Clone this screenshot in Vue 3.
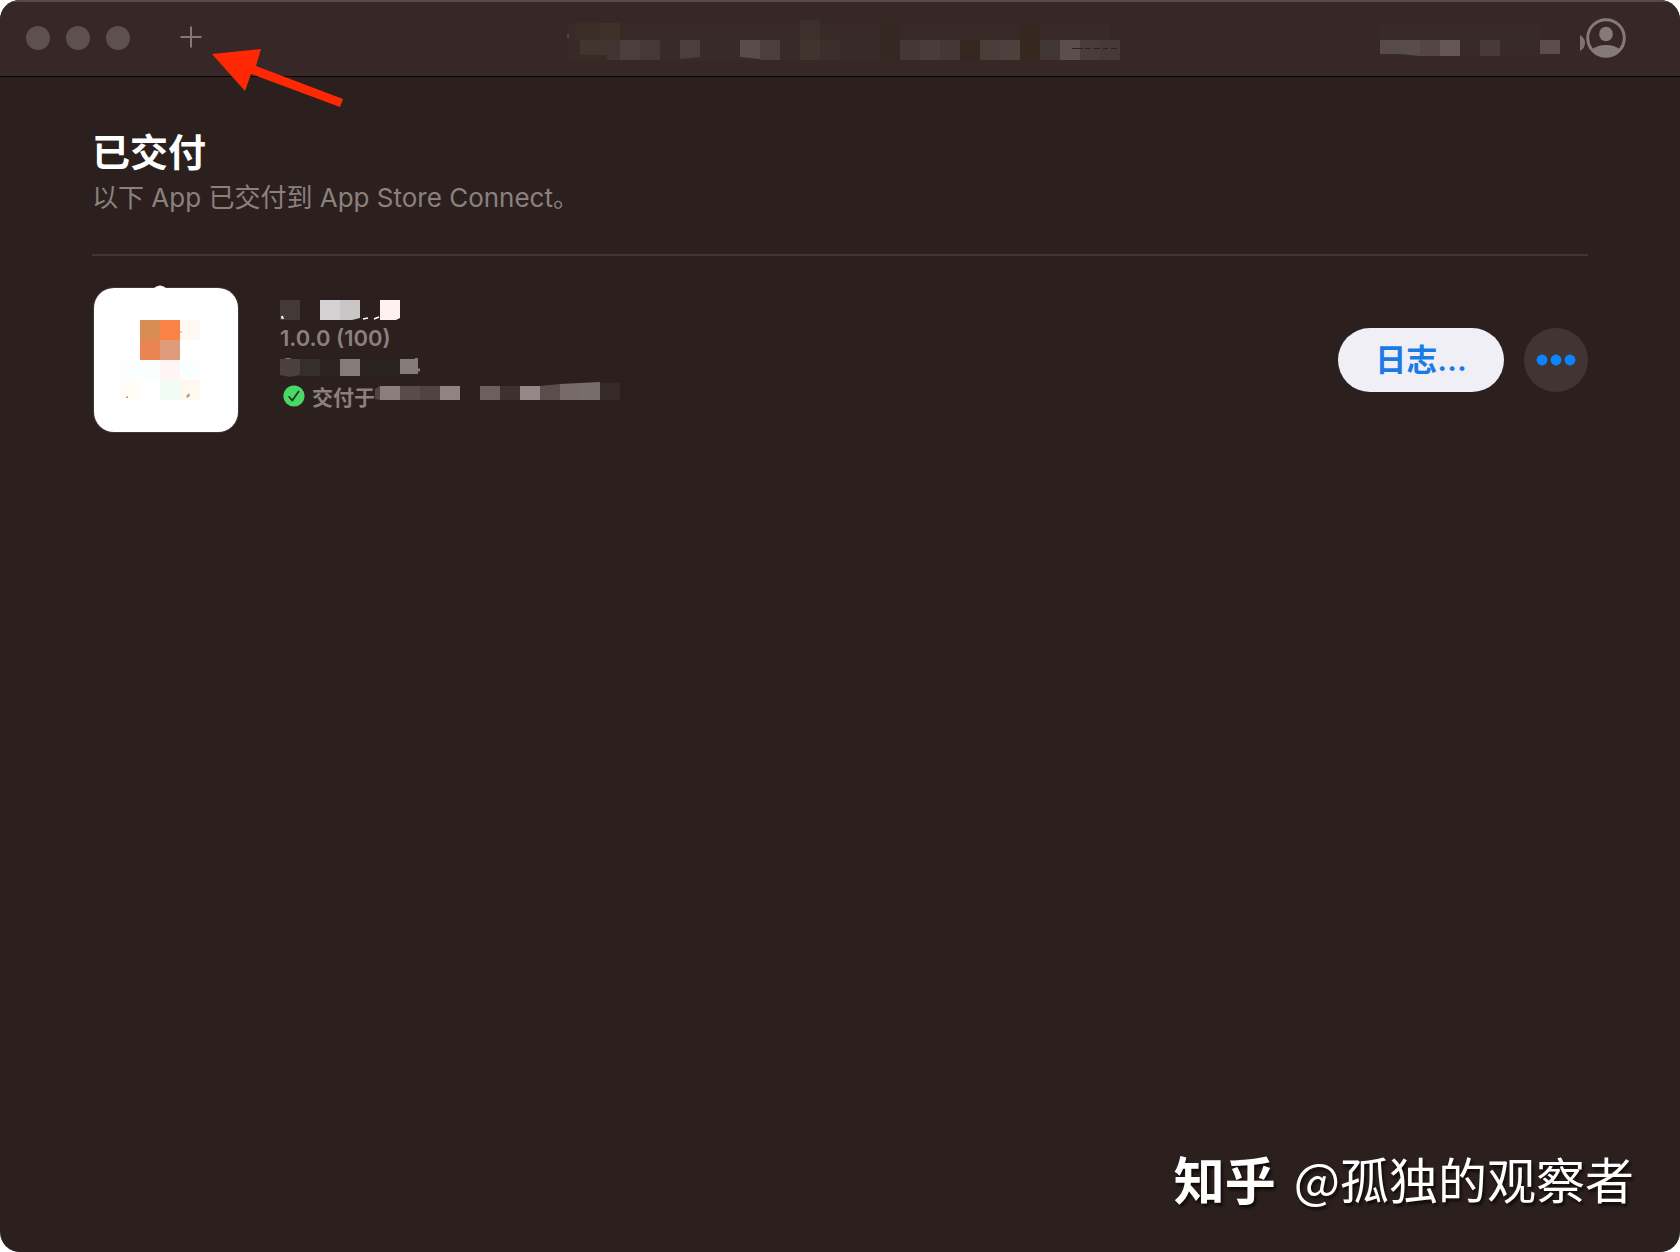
<template>
  <div class="window">
    <header class="titlebar">
      <div class="traffic">
        <span class="light"></span>
        <span class="light"></span>
        <span class="light"></span>
      </div>
      <button class="add" type="button" aria-label="添加 App">
        <svg width="22" height="22" viewBox="0 0 22 22">
          <path d="M11 0.5V21.5M0.5 11H21.5" stroke="#83787a" stroke-width="2" fill="none" />
        </svg>
      </button>
      <svg class="title-mosaic" width="600" height="76" viewBox="0 0 600 76" aria-hidden="true">
        <path d="M28 24H570V60H28Z" fill="#382a26" />
        <polygon v-for="(b, i) in titleBlocks" :key="i" :points="b[0]" :fill="b[1]" />
        <path d="M28 34V38" stroke="#6d625d" />
        <path d="M532 48.5H543M545 48.5H551M554 48.5H560M563 48.5H568M571 48.5H577" stroke="#2b211e" />
      </svg>
      <div class="account">
        <svg width="206" height="76" viewBox="0 0 206 76" aria-hidden="true">
          <path d="M0 24H160V56H0Z" fill="#382a27" />
          <polygon v-for="(b, i) in accountBlocks" :key="i" :points="b[0]" :fill="b[1]" />
          <path d="M200 35Q205 38 205 43T200 51Z" fill="#7d7270" />
        </svg>
        <button class="user" type="button" aria-label="账户">
          <svg width="40" height="40" viewBox="0 0 40 40">
            <circle cx="20" cy="20" r="18.3" fill="none" stroke="#857a79" stroke-width="3" />
            <ellipse cx="20" cy="16" rx="6.8" ry="7.3" fill="#857a79" />
            <path d="M5.5 32C9 28.5 14 27 20 27s11 1.5 14.5 5A19.5 19.5 0 0 1 5.5 32Z" fill="#857a79" />
          </svg>
        </button>
      </div>
    </header>

    <main class="content">
      <h1>已交付</h1>
      <p class="subtitle">以下 App 已交付到 App Store Connect。</p>

      <section class="app-row">
        <svg class="app-icon" width="148" height="152" viewBox="0 0 148 152" role="img" aria-label="App 图标">
          <rect x="1" y="3" width="146" height="146" rx="21" fill="#403634" />
          <path d="M62 4Q68 -1 74 4Z" fill="#fff" />
          <rect x="2" y="4" width="144" height="144" rx="20" fill="#fff" />
          <rect v-for="(b, i) in iconBlocks" :key="i" :x="b[0]" :y="b[1]" width="20" height="20" :fill="b[2]" />
          <path d="M94 112l3-3 1 3-3 2ZM34 113l2-1v2h-2Z" fill="#aaa095" />
          <circle cx="89" cy="48" r="1" fill="#f1b28c" />
        </svg>

        <div class="info">
          <div class="line">
            <svg width="130" height="29" viewBox="0 0 130 29" aria-hidden="true">
              <polygon v-for="(b, i) in nameBlocks" :key="i" :points="b[0]" :fill="b[1]" />
              <path d="M2 21l1 2H2ZM83 24l5-1M94 24l5-2" stroke="#fff" stroke-width="1.5" fill="#fff" />
            </svg>
          </div>
          <div class="line version">1.0.0 (100)</div>
          <div class="line">
            <svg width="140" height="29" viewBox="0 0 140 29" aria-hidden="true">
              <path d="M4 7Q8 4 12 7" stroke="#81767a" stroke-width="1.5" fill="none" />
              <polygon v-for="(b, i) in teamBlocks" :key="i" :points="b[0]" :fill="b[1]" />
              <path d="M136.5 5V21M133 17H140" stroke="#857c79" stroke-width="3" fill="none" />
            </svg>
          </div>
          <div class="line">
            <svg class="check" width="22" height="22" viewBox="0 0 22 22" aria-hidden="true">
              <circle cx="11" cy="11" r="10.6" fill="#49d865" />
              <path d="M6 11.8L9.3 15.5L15.6 6.5" fill="none" stroke="#20301f" stroke-width="1.7" stroke-linecap="round" stroke-linejoin="round" />
            </svg>
            <span>交付于</span>
            <svg class="date" width="250" height="29" viewBox="0 0 250 29" aria-hidden="true">
              <polygon v-for="(b, i) in dateBlocks" :key="i" :points="b[0]" :fill="b[1]" />
            </svg>
          </div>
        </div>

        <div class="actions">
          <button class="log" type="button">日志…</button>
          <button class="more" type="button" aria-label="更多">
            <svg width="40" height="12" viewBox="0 0 40 12">
              <circle cx="6" cy="6" r="5.4" />
              <circle cx="20" cy="6" r="5.4" />
              <circle cx="34" cy="6" r="5.4" />
            </svg>
          </button>
        </div>
      </section>
    </main>

    <svg class="arrow" width="140" height="64" viewBox="0 0 140 64" aria-hidden="true">
      <polygon points="2,9 51,4 46,21 133,54 130,62 41,29 35,46" fill="#ff2805" />
    </svg>

    <div class="watermark">
      <span class="brand">知乎</span>
      <span>@孤独的观察者</span>
    </div>
  </div>
</template>

<script setup>
// rectangle as polygon points
const box = (x, y, w, h) => `${x},${y} ${x + w},${y} ${x + w},${y + h} ${x},${y + h}`

const titleBlocks = [
  [box(35, 23, 35, 17), '#3a2d28'],
  [box(60, 23, 20, 17), '#3e3128'],
  [box(40, 40, 40, 15), '#40352f'],
  [box(67, 40, 13, 20), '#403532'],
  [box(80, 40, 20, 20), '#4b3f3b'],
  [box(100, 40, 20, 20), '#443935'],
  ['140,40 160,40 160,57 140,59', '#4a3f3b'],
  ['200,40 220,40 220,59 200,57', '#5a4d49'],
  [box(220, 40, 20, 20), '#4a3f3c'],
  [box(260, 20, 20, 20), '#3c302c'],
  [box(260, 40, 20, 20), '#40342f'],
  [box(280, 40, 20, 20), '#3b2f2b'],
  [box(340, 20, 20, 40), '#352722'],
  [box(360, 40, 20, 20), '#433835'],
  [box(380, 40, 20, 20), '#4a3d39'],
  [box(400, 40, 20, 20), '#433835'],
  [box(420, 40, 20, 20), '#352620'],
  [box(440, 40, 20, 20), '#4a3e3b'],
  [box(460, 40, 20, 20), '#4d413d'],
  [box(480, 22, 20, 38), '#36281f'],
  [box(500, 40, 20, 20), '#403632'],
  [box(520, 40, 20, 20), '#5b4e4b'],
  [box(540, 40, 20, 20), '#493d3a'],
  [box(560, 40, 20, 20), '#463a37']
]

const accountBlocks = [
  [box(0, 40, 20, 14), '#574b48'],
  ['20,40 40,40 40,56 20,54', '#594d4a'],
  [box(40, 40, 20, 16), '#534644'],
  [box(60, 40, 20, 16), '#645755'],
  [box(100, 40, 20, 16), '#483b37'],
  [box(160, 40, 20, 14), '#5a4d4a']
]

const iconBlocks = [
  [48, 36, '#d98c52'],
  [68, 36, '#fa8245'],
  [48, 56, '#e98553'],
  [68, 56, '#df9c7a'],
  [88, 36, '#fff9f3'],
  [68, 76, '#fff5f5'],
  [88, 76, '#f8fffd'],
  [28, 76, '#fafffd'],
  [48, 76, '#fafffd'],
  [28, 96, '#fffdf5'],
  [68, 96, '#f2fcf7'],
  [88, 96, '#fff8ee']
]

const nameBlocks = [
  [box(0, 0, 120, 5), '#2c1e1e'],
  [box(0, 5, 20, 20), '#433a38'],
  [box(40, 5, 20, 20), '#d6d2d3'],
  ['60,5 80,5 80,23 72,25 60,25', '#c9c6c6'],
  ['100,5 120,5 120,23 116,25 100,25', '#fdf2ef']
]

const teamBlocks = [
  ['0,6 20,6 20,22 10,24 0,22', '#4a413f'],
  [box(20, 6, 20, 17), '#352e2b'],
  [box(40, 6, 20, 17), '#2d2421'],
  [box(60, 6, 20, 17), '#857b78'],
  [box(80, 6, 40, 17), '#292220'],
  [box(120, 6, 17, 15), '#857c79']
]

const dateBlocks = [
  ['0,7 5,4 5,18 0,17', '#514543'],
  [box(5, 4, 20, 14), '#8b7f7d'],
  [box(25, 4, 20, 14), '#584b49'],
  [box(45, 4, 20, 14), '#504341'],
  [box(65, 4, 20, 14), '#8f8482'],
  [box(105, 4, 20, 14), '#6c605e'],
  [box(125, 4, 20, 14), '#3d312f'],
  [box(145, 4, 20, 14), '#948988'],
  ['165,4 185,2 185,18 165,18', '#594e4b'],
  ['185,2 205,1 205,18 185,18', '#766b69'],
  ['205,1 225,0 225,18 205,18', '#776d6a'],
  [box(225, 1, 20, 17), '#362a28']
]
</script>

<style>
body {
  margin: 0;
  background: #fff;
}
</style>

<style scoped>
.window {
  position: relative;
  box-sizing: border-box;
  min-height: 100vh;
  overflow: hidden;
  border-radius: 20px;
  background: #2c201e;
  color: #8b807e;
  font-family: Inter, "Noto Sans CJK SC", sans-serif;
}

button {
  padding: 0;
  border: 0;
  background: none;
  font-family: inherit;
  cursor: pointer;
}

svg {
  display: block;
  flex: none;
}

.titlebar {
  display: flex;
  align-items: center;
  box-sizing: border-box;
  height: 77px;
  padding: 0 54px 0 26px;
  border-bottom: 1px solid #080404;
  background: #372827;
  box-shadow: inset 0 2px #574a48;
}

.traffic {
  display: flex;
  gap: 16px;
}

.light {
  width: 24px;
  height: 24px;
  border-radius: 50%;
  background: #5d504e;
}

.add {
  margin: 0 auto 2px 50px;
}

.title-mosaic {
  margin-right: 240px;
}

.account {
  display: flex;
  align-items: center;
}

.content {
  padding: 50px 92px 0;
}

h1 {
  margin: 0;
  color: #fff;
  font-size: 38px;
  font-weight: 700;
  line-height: 50px;
}

.subtitle {
  margin: 0;
  padding-bottom: 35px;
  border-bottom: 2px solid #3f3533;
  font-size: 26px;
  line-height: 42px;
}

.app-row {
  display: flex;
  align-items: center;
  padding-top: 28px;
}

.info {
  margin: 0 auto 0 40px;
  padding-bottom: 15px;
  font-size: 21px;
  font-weight: 600;
}

.line {
  display: flex;
  align-items: center;
  height: 29px;
}

.version {
  font-size: 22px;
}

.check {
  margin: 0 7px 0 3px;
}

.actions {
  display: flex;
  gap: 20px;
}

.log {
  width: 166px;
  height: 64px;
  padding-bottom: 5px;
  border-radius: 32px;
  background: #f0eff5;
  color: #1a7be6;
  font-size: 31px;
  font-weight: 600;
}

.more {
  display: flex;
  align-items: center;
  justify-content: center;
  width: 64px;
  height: 64px;
  border-radius: 50%;
  background: #413533;
  fill: #0d84ff;
}

.arrow {
  position: absolute;
  top: 45px;
  left: 210px;
}

.watermark {
  position: absolute;
  right: 46px;
  bottom: 38px;
  display: flex;
  align-items: center;
  gap: 18px;
  color: #fff;
  font-family: "Noto Sans CJK SC", sans-serif;
  font-size: 49px;
  line-height: 72px;
  text-shadow: 2px 3px 3px #110b0a;
}

.brand {
  font-size: 51px;
  font-weight: 700;
}
</style>
